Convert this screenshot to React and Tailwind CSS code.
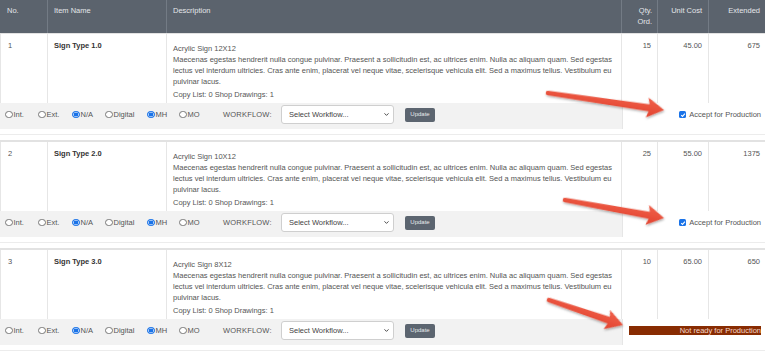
import { ChevronDown } from 'lucide-react'

const items = [
  { no: 1, name: 'Sign Type 1.0', size: '12X12', qty: 15, cost: '45.00', ext: 675, ready: true },
  { no: 2, name: 'Sign Type 2.0', size: '10X12', qty: 25, cost: '55.00', ext: 1375, ready: true },
  { no: 3, name: 'Sign Type 3.0', size: '8X12', qty: 10, cost: '65.00', ext: 650, ready: false },
]

const cols = 'grid grid-cols-[48px_119px_455px_36px_51px_56px]'

function Radio({ label, checked, className }) {
  return (
    <div className={`flex items-center ${className}`}>
      {checked ? (
        <span className="box-border h-[7.5px] w-[7.5px] rounded-full border-[1.5px] border-[#1a73e8] bg-[#1a73e8] shadow-[inset_0_0_0_0.6px_#fff]" />
      ) : (
        <span className="box-border h-[7.5px] w-[7.5px] rounded-full border border-[#777] bg-white" />
      )}
      <span className="ml-[1px]">{label}</span>
    </div>
  )
}

function Arrow({ x1, y1, x2, y2 }) {
  const L = Math.hypot(x2 - x1, y2 - y1)
  const a = (Math.atan2(y2 - y1, x2 - x1) * 180) / Math.PI
  return (
    <g transform={`translate(${x1} ${y1}) rotate(${a})`} filter="url(#sh)">
      <path
        d={`M0 -2.3 L${L - 15} -3.6 L${L - 17} -10 L${L} 0 L${L - 17} 10 L${L - 15} 3.6 L0 2.3 A2.3 2.3 0 0 1 0 -2.3 Z`}
        fill="url(#ag)"
      />
    </g>
  )
}

function ItemRow({ item }) {
  return (
    <div>
      <div className={`${cols} h-[70px] border-t border-[#e2e2e2] text-[#555]`}>
        <div className="border-l border-r border-[#e6e6e6] pl-[7px] pt-[6px]">{item.no}</div>
        <div className="border-r border-[#e6e6e6] pl-[6px] pt-[6px] font-bold text-[#333]">{item.name}</div>
        <div className="border-r border-[#e6e6e6] pl-[6px] pt-[9px]">
          <div>Acrylic Sign {item.size}</div>
          <div>
            Maecenas egestas hendrerit nulla congue pulvinar. Praesent a sollicitudin est, ac ultrices enim. Nulla ac aliquam quam. Sed egestas
            <br />
            lectus vel interdum ultricies. Cras ante enim, placerat vel neque vitae, scelerisque vehicula elit. Sed a maximus tellus. Vestibulum eu
            <br />
            pulvinar lacus.
          </div>
          <div className="mt-[2px]">Copy List: 0 Shop Drawings: 1</div>
        </div>
        <div className="border-r border-[#e6e6e6] pr-[6px] pt-[6px] text-right">{item.qty}</div>
        <div className="border-r border-[#e6e6e6] pr-[6px] pt-[6px] text-right">{item.cost}</div>
        <div className="pr-[5px] pt-[6px] text-right">{item.ext}</div>
      </div>
      <div className="grid h-[26px] grid-cols-[622px_143px] text-[#555]">
        <div className="flex items-center bg-[#f2f2f2] pb-[3px] pl-[5px]">
          <Radio label="Int." className="w-[33px]" />
          <Radio label="Ext." className="w-[34px]" />
          <Radio label="N/A" checked className="w-[33px]" />
          <Radio label="Digital" className="w-[42px]" />
          <Radio label="MH" checked className="w-[32px]" />
          <Radio label="MO" className="w-[44px]" />
          <span className="w-[58px] tracking-[0.2px]">WORKFLOW:</span>
          <div className="flex h-[19px] w-[113px] items-center justify-between rounded-[3px] border border-[#cfcfcf] bg-white pl-[7px] pr-[3px] text-[#444]">
            <span>Select Workflow...</span>
            <ChevronDown size={7} strokeWidth={3} className="text-[#333]" />
          </div>
          <button className="ml-[11px] flex h-[14px] w-[30px] items-center justify-center rounded-[2px] bg-[#5c6570] text-[6px] text-[#e8eaec]">
            Update
          </button>
        </div>
        <div className="flex items-center justify-end border-l border-[#e6e6e6] bg-white pb-[3px] pr-[4px]">
          {item.ready ? (
            <div className="flex items-center">
              <span className="mr-[3px] flex h-[7px] w-[7px] items-center justify-center rounded-[1.5px] bg-[#1a73e8]">
                <svg viewBox="0 0 10 10" className="h-[6px] w-[6px]">
                  <path d="M2 5.2 L4.2 7.3 L8.2 2.8" stroke="#fff" strokeWidth="1.8" fill="none" />
                </svg>
              </span>
              <span>Accept for Production</span>
            </div>
          ) : (
            <div className="ml-[6px] flex h-[9px] w-full items-center justify-end bg-[#882c02] text-[#f6d9cf] leading-none">
              Not ready for Production
            </div>
          )}
        </div>
      </div>
      <div className="h-[12px] border-b border-[#e2e2e2] pt-[5px]">
        <div className="h-[1px] bg-[#ececec]" />
      </div>
    </div>
  )
}

export default function App() {
  return (
    <div className="relative h-[351px] w-[768px] overflow-hidden bg-white font-['Liberation_Sans',Arial,sans-serif] text-[7.5px] leading-[11px]">
      <div className="w-[765px]">
        <div className={`${cols} h-[33px] bg-[#5b636d] text-[#e3e6e9] leading-[10.5px]`}>
          <div className="border-r border-[#737b85] pl-[7px] pt-[6px]">No.</div>
          <div className="border-r border-[#737b85] pl-[6px] pt-[6px]">Item Name</div>
          <div className="border-r border-[#737b85] pl-[6px] pt-[6px]">Description</div>
          <div className="border-r border-[#737b85] pr-[5px] pt-[6px] text-right">
            Qty.
            <br />
            Ord.
          </div>
          <div className="border-r border-[#737b85] pr-[6px] pt-[6px] text-right">Unit Cost</div>
          <div className="pr-[5px] pt-[6px] text-right">Extended</div>
        </div>
        {items.map((item) => (
          <ItemRow key={item.no} item={item} />
        ))}
      </div>
      <svg className="pointer-events-none absolute left-0 top-0" width="768" height="351">
        <defs>
          <linearGradient id="ag" x1="0" y1="0" x2="0" y2="1">
            <stop offset="0" stopColor="#f0614b" />
            <stop offset="1" stopColor="#e2432f" />
          </linearGradient>
          <filter id="sh" x="-20%" y="-50%" width="140%" height="200%">
            <feDropShadow dx="0.8" dy="1.2" stdDeviation="0.8" floodColor="#000" floodOpacity="0.35" />
          </filter>
        </defs>
        <Arrow x1={548} y1={93} x2={664} y2={110} />
        <Arrow x1={565} y1={200} x2={664} y2={218} />
        <Arrow x1={549} y1={300} x2={623} y2={325} />
      </svg>
    </div>
  )
}
